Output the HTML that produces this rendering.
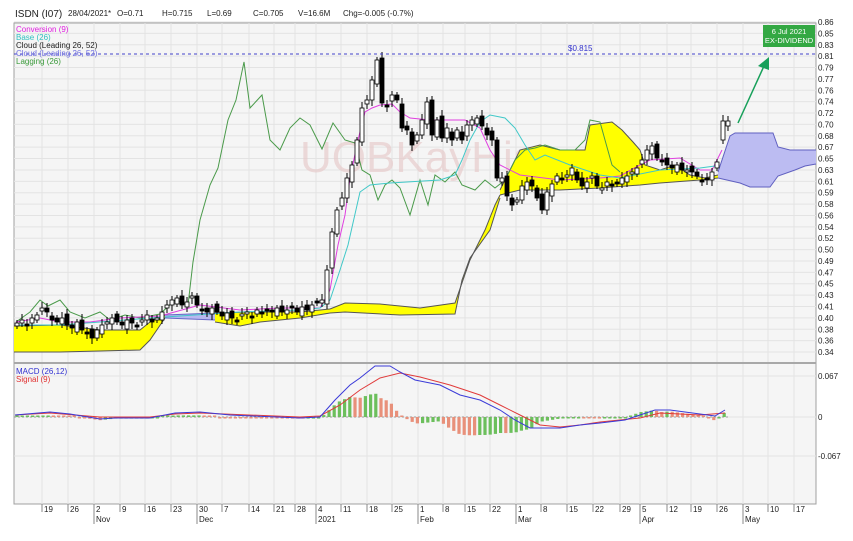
<!DOCTYPE html>
<html><head><meta charset="utf-8"><style>
body{margin:0;background:#fff;width:853px;height:536px;overflow:hidden;font-family:"Liberation Sans",sans-serif}
svg text{font-family:"Liberation Sans",sans-serif}
</style></head><body>
<svg id="s" width="853" height="536" viewBox="0 0 853 536" xmlns="http://www.w3.org/2000/svg">
<rect x="0" y="0" width="853" height="536" fill="#fff"/>
<rect x="14" y="23" width="802" height="481" fill="#f5f5f5" stroke="#a0a0a0" stroke-width="1"/>
<g id="grid" stroke="#e3e3e3" stroke-width="1"></g>
<line x1="14" y1="363" x2="816" y2="363" stroke="#a8a8a8" stroke-width="2"/>
<text x="300" y="172" font-family="Liberation Serif,serif" font-size="44" fill="#e8cccc" opacity="0.7">UOBKayHian</text>
<g id="cloud"></g>
<g id="lines" fill="none" stroke-width="1"></g>
<g id="candles"></g>
<g id="macd"></g>
<line x1="14" y1="54" x2="816" y2="54" stroke="#4444cc" stroke-dasharray="3,3" stroke-width="1"/>
<text x="568" y="51" font-size="8" fill="#3333cc">$0.815</text>
<rect x="763" y="25" width="52" height="22" fill="#33a843"/>
<text x="789" y="34" font-size="7.5" fill="#fff" text-anchor="middle" font-family="Liberation Mono,monospace">6 Jul 2021</text>
<text x="789" y="43" font-size="7.5" fill="#fff" text-anchor="middle" font-family="Liberation Mono,monospace">EX-DIVIDEND</text>
<line x1="738" y1="123" x2="764" y2="66" stroke="#17a05a" stroke-width="1.5"/>
<polygon points="769,57 758,66 769,70" fill="#17a05a"/>
<text x="15" y="17" font-size="10" fill="#222">ISDN (I07)</text>
<g font-size="8" fill="#222">
<text x="68" y="16">28/04/2021*</text><text x="117" y="16">O=0.71</text><text x="162" y="16">H=0.715</text><text x="207" y="16">L=0.69</text><text x="253" y="16">C=0.705</text><text x="298" y="16">V=16.6M</text><text x="343" y="16">Chg=-0.005 (-0.7%)</text>
</g>
<g font-size="8">
<text x="16" y="32" fill="#e020e0">Conversion (9)</text>
<text x="16" y="40" fill="#30c0c0">Base (26)</text>
<text x="16" y="48" fill="#222">Cloud (Leading 26, 52)</text>
<text x="16" y="56" fill="#7070e0">Cloud (Leading 26, 52)</text>
<text x="16" y="64" fill="#3a9a3a">Lagging (26)</text>
<text x="16" y="374" fill="#3030d0">MACD (26,12)</text>
<text x="16" y="382" fill="#e03030">Signal (9)</text>
</g>
<g id="axis" font-size="8" fill="#222"></g>
</svg>
<script>
(function(){
var NS='http://www.w3.org/2000/svg';
function el(p,t,a){var e=document.createElementNS(NS,t);for(var k in a)e.setAttribute(k,a[k]);document.getElementById(p).appendChild(e);return e;}
var labels=['0.86','0.85','0.83','0.81','0.79','0.77','0.76','0.74','0.72','0.70','0.68','0.67','0.65','0.63','0.61','0.59','0.58','0.56','0.54','0.52','0.50','0.49','0.47','0.45','0.43','0.41','0.40','0.38','0.36','0.34'];
labels.forEach(function(l,i){var y=22+i*11.38;el('grid','line',{x1:14,y1:y,x2:816,y2:y});var t=el('axis','text',{x:818,y:y+3});t.textContent=l;});
[376,417,456].forEach(function(y){el('grid','line',{x1:14,y1:y,x2:816,y2:y});});
[['0.067',376],['0',417],['-0.067',456]].forEach(function(a){var t=el('axis','text',{x:818,y:a[1]+3});t.textContent=a[0];});
var ticks=[[42,'19'],[68,'26'],[94,'2','Nov'],[120,'9'],[145,'16'],[171,'23'],[197,'30','Dec'],[222,'7'],[249,'14'],[274,'21'],[295,'28'],[316,'4','2021'],[341,'11'],[367,'18'],[392,'25'],[418,'1','Feb'],[443,'8'],[465,'15'],[490,'22'],[516,'1','Mar'],[541,'8'],[567,'15'],[593,'22'],[620,'29'],[640,'5','Apr'],[667,'12'],[691,'19'],[717,'26'],[743,'3','May'],[768,'10'],[794,'17']];
ticks.forEach(function(t){var x=t[0];el('grid','line',{x1:x,y1:23,x2:x,y2:504});
 el('axis','line',{x1:x,y1:504,x2:x,y2:t[2]?524:512,stroke:'#888'});
 var a=el('axis','text',{x:x+2,y:512});a.textContent=t[1];
 if(t[2]){var b=el('axis','text',{x:x+2,y:522});b.textContent=t[2];}});
function pts(a){return a.map(function(p){return p.join(',')}).join(' ');}
function poly(p,col,par){el(par||'lines','polyline',{points:pts(p),stroke:col,fill:'none','stroke-width':1});}
function band(tp,bt,fill,stroke){var p=tp.concat(bt.slice().reverse());el('cloud','polygon',{points:pts(p),fill:fill,stroke:'none'});
 el('cloud','polyline',{points:pts(tp),fill:'none',stroke:stroke||'#555','stroke-width':1});el('cloud','polyline',{points:pts(bt),fill:'none',stroke:stroke||'#555','stroke-width':1});}
band([[14,326],[60,325],[100,330],[140,330],[150,322],[165,315]],[[14,352],[60,352],[100,351],[140,350],[150,340],[165,318]],'#ffff00');
band([[165,315],[215,313]],[[165,318],[215,320]],'#b8b8f0','#6868c8');
band([[215,313],[250,312],[300,312],[330,309]],[[215,322],[240,326],[260,322],[300,318],[330,313]],'#ffff00');
band([[330,309],[345,303],[380,304],[420,308],[455,303],[470,260],[485,230],[495,205],[500,195]],[[330,313],[345,312],[400,315],[455,314],[462,280],[470,258],[490,230],[500,198]],'#ffff00');
band([[500,190],[520,150],[540,145],[560,150],[585,150],[590,125],[612,122],[622,130],[633,142],[640,150],[645,165],[660,170],[675,165],[690,175],[705,178],[718,175]],[[500,195],[520,190],[560,190],[600,188],[640,185],[660,183],[700,180],[718,178]],'#ffff00');
band([[718,172],[730,136],[735,133],[773,133],[778,147],[790,150],[816,150]],[[718,178],[740,183],[750,187],[770,187],[778,176],[795,170],[805,166],[816,164]],'#bcbcf2','#6060c0');
poly([[16,322],[30,312],[40,300],[48,306],[60,300],[70,312],[85,318],[100,312],[110,320],[125,315],[140,318],[160,314],[175,300],[188,305],[193,262],[200,220],[210,185],[218,168],[228,120],[236,100],[244,62],[250,108],[262,95],[270,140],[280,150],[290,128],[300,118],[310,125],[322,149],[333,123],[345,140],[355,143],[362,170],[370,175],[378,200],[385,185],[392,180],[400,188],[410,215],[420,180],[428,205],[435,175],[445,182],[455,172],[462,185],[475,190],[485,180],[495,188],[505,180],[515,160],[525,150],[535,148],[545,145],[560,150],[575,150],[585,140],[590,120],[600,122],[605,140],[612,165],[620,172]],'#4a9a4a');
poly([[16,322],[40,318],[60,322],[90,322],[120,318],[160,316],[200,305],[240,310],[280,308],[320,308],[330,290],[338,245],[345,215],[350,178],[358,140],[365,112],[372,108],[380,105],[392,104],[400,112],[410,118],[430,120],[465,120],[480,128],[490,150],[500,165],[520,175],[560,180],[600,178],[620,176],[640,165],[650,160],[680,158],[700,170],[712,170],[722,150]],'#e040e0');
poly([[16,325],[60,325],[100,322],[150,318],[180,316],[240,312],[300,310],[320,308],[330,300],[340,270],[348,245],[360,192],[370,185],[390,183],[440,180],[455,175],[462,160],[470,140],[480,122],[490,115],[505,118],[515,128],[525,145],[535,160],[545,155],[570,165],[600,175],[620,178],[660,170],[700,168],[715,166]],'#40c8c8');
var cl=[[17,323],[22,320],[27,325],[32,318],[37,315],[42,308],[47,312],[52,320],[57,322],[62,318],[67,325],[72,328],[77,322],[82,330],[87,333],[92,338],[97,330],[102,325],[107,322],[112,318],[117,322],[122,325],[127,320],[132,323],[137,326],[142,320],[147,315],[152,322],[157,318],[162,312],[167,305],[172,300],[177,298],[182,305],[187,302],[192,296],[197,305],[202,310],[207,312],[212,308],[217,312],[222,316],[227,313],[232,318],[237,320],[242,314],[247,312],[252,316],[257,310],[262,313],[267,310],[272,312],[277,308],[282,312],[287,310],[292,308],[297,312],[302,307],[307,310],[312,305],[317,303],[322,300],[327,270],[332,232],[337,210],[342,198],[347,178],[352,165],[357,140],[362,108],[367,100],[372,80],[377,60],[382,103],[387,105],[392,95],[397,100],[402,128],[407,130],[412,145],[417,135],[422,120],[427,102],[432,135],[437,120],[442,138],[447,128],[452,140],[457,130],[462,140],[467,125],[472,120],[477,118],[482,126],[487,135],[492,140],[497,178],[502,178],[507,196],[512,205],[517,200],[522,186],[527,182],[532,186],[537,198],[542,210],[547,192],[552,184],[557,176],[562,180],[567,175],[572,168],[577,180],[582,186],[587,182],[592,176],[597,186],[602,188],[607,182],[612,186],[617,184],[622,178],[627,176],[632,172],[637,168],[642,160],[647,150],[652,146],[657,158],[662,162],[667,165],[672,168],[677,165],[682,170],[687,170],[692,172],[697,176],[702,180],[707,178],[712,172],[717,162],[723,121],[728,121]];
for(var i=0;i<cl.length;i++){var x=cl[i][0],c=cl[i][1],o=i?cl[i-1][1]+((i*7)%5-2)*2:c+3;
 if(i==cl.length-1)o=c+5; if(i==cl.length-2)o=140;
 var t0=Math.min(o,c),b0=Math.max(o,c);if(b0-t0<2)b0=t0+2;
 var up=c<o;el('candles','line',{x1:x,y1:t0-3-((i*3)%4),x2:x,y2:b0+3+((i*5)%4),stroke:'#000','stroke-width':1});
 el('candles','rect',{x:x-2,y:t0,width:4,height:b0-t0,fill:up?'#fff':'#000',stroke:'#000','stroke-width':0.8});}
var B=[[15,415],[50,412],[70,414],[100,419],[115,418],[150,418],[175,413],[200,412],[230,415],[300,418],[320,417],[335,400],[350,385],[360,378],[375,366],[390,366],[400,372],[415,380],[440,385],[460,395],[480,400],[500,410],[515,420],[530,428],[545,428],[560,428],[580,425],[600,423],[625,420],[640,415],[655,410],[670,410],[700,414],[715,416],[725,410]];
var R=[[15,415],[50,413],[100,417],[150,417],[175,414],[200,413],[300,417],[320,416],[340,405],[360,390],[380,378],[400,373],[420,377],[450,385],[480,395],[500,405],[520,415],[540,425],[560,427],[580,425],[600,422],[640,418],[660,413],[700,415],[725,413]];
function iv(a,x){for(var j=1;j<a.length;j++)if(x<=a[j][0]){var t=(x-a[j-1][0])/(a[j][0]-a[j-1][0]);return a[j-1][1]+t*(a[j][1]-a[j-1][1]);}return a[a.length-1][1];}
el('macd','line',{x1:14,y1:417,x2:728,y2:417,stroke:'#999','stroke-dasharray':'2,2'});
var prev=0;for(var xx=17;xx<=728;xx+=5.2){var d=(iv(R,xx)-iv(B,xx))*1.6;if(xx>440&&xx<525)d-=10*Math.sin((xx-440)/85*Math.PI);
 var col=d>=prev?'#6cbf5c':'#e8907a';prev=d;var h=Math.abs(d);if(h<1.5)h=1.5;
 el('macd','rect',{x:xx-1.6,y:d>0?417-h:417,width:3.2,height:h,fill:col});}
poly(R,'#e03a3a','macd');poly(B,'#3a3ad8','macd');
})();
</script>
</body></html>
